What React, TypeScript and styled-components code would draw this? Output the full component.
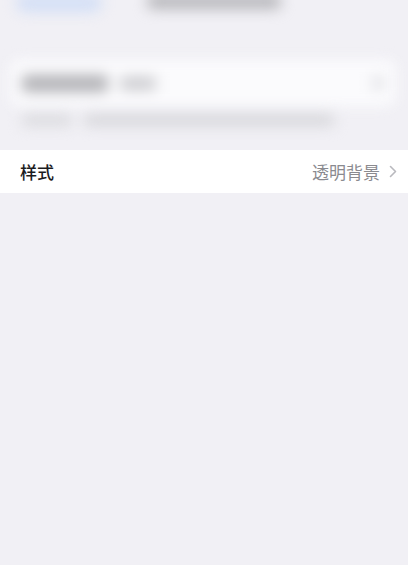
import React from "react";
import styled, { createGlobalStyle } from "styled-components";

const Global = createGlobalStyle`
  html, body { margin: 0; padding: 0; background: #f1f0f5; }
  body { font-family: "Noto Sans CJK SC", "Noto Sans", sans-serif; }
`;

const Page = styled.div`
  width: 408px;
  min-height: 565px;
  background: #f1f0f5;
  display: flex;
  flex-direction: column;
  overflow: hidden;
`;

const Blurred = styled.div`
  height: 150px;
  filter: blur(7px);
  display: flex;
  flex-direction: column;
`;

const TopBar = styled.div`
  display: flex;
  align-items: flex-start;
  gap: 45px;
  padding: 0 0 0 16px;
  margin-top: -6px;
`;

const Blob = styled.div<{ $w: number; $h: number; $c: string; $r?: number }>`
  width: ${(p) => p.$w}px;
  height: ${(p) => p.$h}px;
  background: ${(p) => p.$c};
  border-radius: ${(p) => p.$r ?? 4}px;
`;

const Card = styled.div`
  margin: 48px 12px 0 10px;
  height: 46px;
  background: #fbfbfd;
  border-radius: 8px;
  display: flex;
  align-items: center;
  justify-content: space-between;
  padding: 0 12px;
`;

const TitleGroup = styled.div`
  display: flex;
  align-items: center;
  gap: 12px;
`;

const Desc = styled.div`
  margin: 8px 0 0 22px;
  display: flex;
  gap: 12px;
`;

const Row = styled.div`
  height: 43px;
  background: #ffffff;
  display: flex;
  align-items: center;
  justify-content: space-between;
  padding: 0 11px 0 20px;
`;

const Label = styled.span`
  font-size: 17px;
  font-weight: 500;
  color: #1c1c1e;
`;

const Value = styled.span`
  display: flex;
  align-items: center;
  gap: 9px;
  font-size: 17px;
  color: #8a8a8f;
  margin-left: auto;
  padding-left: 2px;
`;

export default function App() {
  return (
    <>
      <Global />
      <Page>
        <Blurred>
          <TopBar>
            <Blob $w={86} $h={18} $c="#d3dff6" $r={9} />
            <Blob $w={134} $h={15} $c="#b6b6ba" $r={6} />
          </TopBar>
          <Card>
            <TitleGroup>
              <Blob $w={86} $h={17} $c="#b2b2b6" />
              <Blob $w={36} $h={13} $c="#cacace" />
            </TitleGroup>
            <Blob $w={12} $h={14} $c="#e2e2e6" />
          </Card>
          <Desc>
            <Blob $w={50} $h={12} $c="#dadade" />
            <Blob $w={250} $h={12} $c="#d6d6da" />
          </Desc>
        </Blurred>
        <Row>
          <Label>样式</Label>
          <Value>
            透明背景
            <svg width="8" height="13" viewBox="0 0 8 13" fill="none">
              <path d="M1.5 1.5 L6.5 6.5 L1.5 11.5" stroke="#b9b9be" strokeWidth="1.6" strokeLinecap="round" strokeLinejoin="round" />
            </svg>
          </Value>
        </Row>
      </Page>
    </>
  );
}
